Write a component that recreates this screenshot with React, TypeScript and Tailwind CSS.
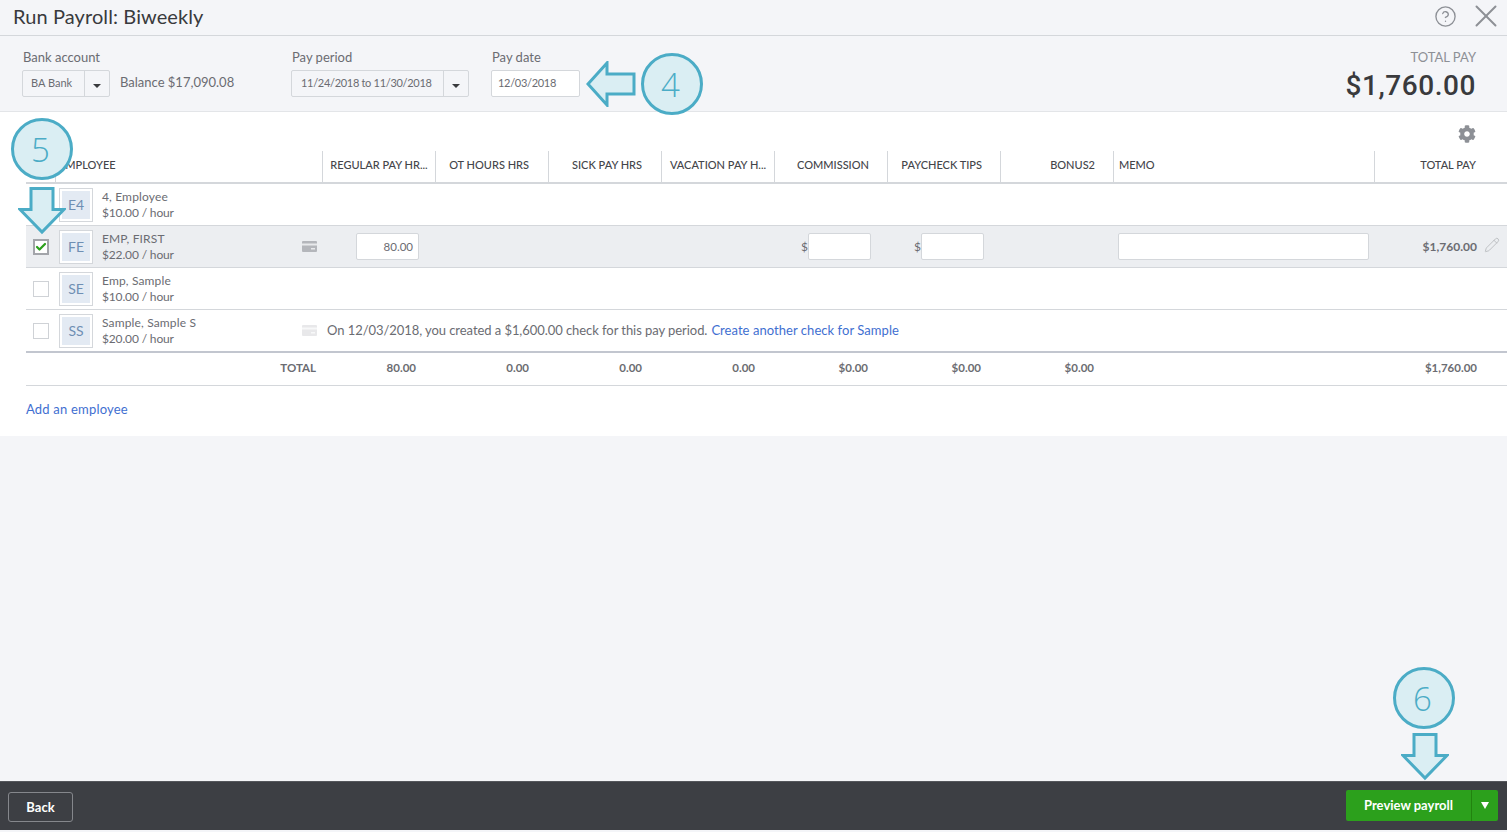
/**
 * Run Payroll: Biweekly — payroll grid with numbered callouts on top.
 */
import { Check, CircleHelp, Pencil, X } from 'lucide-react';
import { FaCog } from 'react-icons/fa';
import clsx from 'clsx';

const gridCols = 'grid grid-cols-[29px_267px_repeat(7,113px)_261px_133px]';

const headers = [
  { label: 'REGULAR PAY HR...', cls: 'justify-center' },
  { label: 'OT HOURS HRS', cls: 'justify-end pr-[19px]' },
  { label: 'SICK PAY HRS', cls: 'justify-end pr-[19px]' },
  { label: 'VACATION PAY H...', cls: 'justify-center' },
  { label: 'COMMISSION', cls: 'justify-end pr-[18px]' },
  { label: 'PAYCHECK TIPS', cls: 'justify-end pr-[18px]' },
  { label: 'BONUS2', cls: 'justify-end pr-[18px]' },
  { label: 'MEMO', cls: 'justify-start pl-[5px]' },
  { label: 'TOTAL PAY', cls: 'justify-end pr-[31px]' },
];

const totals = ['80.00', '0.00', '0.00', '0.00', '$0.00', '$0.00', '$0.00'];

function CardIcon({ faded }: { faded?: boolean }) {
  return (
    <svg width="15" height="11" viewBox="0 0 15 11" className={faded ? 'opacity-30' : ''}>
      <rect width="15" height="11" rx="1" fill="#b4b6bb" />
      <rect y="2.5" width="15" height="2" fill="#e8e9ec" />
      <rect x="9" y="7" width="4" height="1.5" fill="#e8e9ec" />
    </svg>
  );
}

function Checkbox({ checked }: { checked?: boolean }) {
  return (
    <div
      className={clsx(
        'ml-[7px] flex h-[16px] w-[16px] items-center justify-center bg-white',
        checked ? 'border-2 border-[#a3a5aa]' : 'border border-[#cfd2d6]',
      )}
    >
      {checked && <Check size={12} strokeWidth={4.5} className="text-[#2ca01c]" />}
    </div>
  );
}

function Employee({ initials, name, rate, children }: { initials: string; name: string; rate: string; children?: React.ReactNode }) {
  return (
    <div className="flex items-center pl-1 pr-[5px]">
      <div className="h-[34px] w-[34px] border border-[#d4d7db] bg-white p-[2px]">
        <div className="flex h-full w-full items-center justify-center bg-[#e3eaf3] text-[14px] text-[#6f8fb3]">{initials}</div>
      </div>
      <div className="ml-[9px] text-[12px] leading-[16px] text-[#6b6c72]">
        <div className="tracking-[0.15px]">{name}</div>
        <div className="tracking-[-0.15px]">{rate}</div>
      </div>
      <div className="ml-auto">{children}</div>
    </div>
  );
}

function MoneyInput() {
  return (
    <div className="flex items-center justify-end pr-[16px] text-[12px] text-[#6b6c72]">
      <span>$</span>
      <div className="h-[27px] w-[63px] rounded-[2px] border border-[#d4d7db] bg-white" />
    </div>
  );
}

function Callout({ n, className }: { n: number; className: string }) {
  return (
    <div
      className={clsx(
        "absolute flex h-[62px] w-[62px] items-center justify-center rounded-full border-[3px] border-[#4bacc6] bg-[#daeef3] pr-[3px] pt-px font-['Open_Sans',sans-serif] text-[33px] font-light text-[#4bacc6]",
        className,
      )}
    >
      {n}
    </div>
  );
}

function DownArrow({ className }: { className: string }) {
  return (
    <svg width="48" height="48" viewBox="0 0 48 48" className={clsx('absolute', className)}>
      <path d="M13 1.5h22v21h11L24 45 2 22.5h11z" fill="#daeef3" stroke="#4bacc6" strokeWidth="3" />
    </svg>
  );
}

export default function App() {
  return (
    <div className="relative flex h-[832px] w-[1507px] flex-col overflow-hidden bg-[#f4f5f8] font-['Lato',sans-serif] text-[#6b6c72]">
      {/* Title bar */}
      <div className="flex h-9 shrink-0 items-center justify-between border-b border-[#d4d7db] pb-[3px] pl-[13px] pr-[2px]">
        <h1 className="text-[20px] tracking-[0.1px] text-[#393a3d]">Run Payroll: Biweekly</h1>
        <div className="flex items-center gap-[10px] text-[#8d9096]">
          <CircleHelp size={23} strokeWidth={1.4} />
          <X size={38} strokeWidth={1.25} />
        </div>
      </div>

      {/* Filters */}
      <div className="flex h-[76px] shrink-0 border-b border-[#e3e5e8] pl-[22px] pr-[31px] pt-3 text-[13px]">
        <div className="w-[269px]">
          <div className="pl-px leading-[18px]">Bank account</div>
          <div className="mt-[4px] flex items-center">
            <div className="flex h-[27px] w-[88px] items-center rounded-[2px] border border-[#d4d7db] bg-[#f4f5f8] text-[11px]">
              <span className="w-[61px] pl-[8px]">BA Bank</span>
              <span className="flex h-full flex-1 items-center justify-center border-l border-[#d4d7db] pt-1">
                <span className="border-x-[4px] border-t-[4px] border-x-transparent border-t-[#393a3d]" />
              </span>
            </div>
            <span className="ml-[10px] pb-[2px]">Balance $17,090.08</span>
          </div>
        </div>
        <div className="w-[200px]">
          <div className="pl-px leading-[18px]">Pay period</div>
          <div className="mt-[4px] flex h-[27px] w-[178px] items-center rounded-[2px] border border-[#d4d7db] bg-[#f4f5f8] text-[11px] tracking-[-0.3px]">
            <span className="w-[151px] whitespace-nowrap pl-[9px]">11/24/2018 to 11/30/2018</span>
            <span className="flex h-full flex-1 items-center justify-center border-l border-[#d4d7db] pt-1">
              <span className="border-x-[4px] border-t-[4px] border-x-transparent border-t-[#393a3d]" />
            </span>
          </div>
        </div>
        <div>
          <div className="pl-px leading-[18px]">Pay date</div>
          <div className="mt-[4px] flex h-[27px] w-[89px] items-center rounded-[2px] border border-[#d4d7db] bg-white pl-[6px] text-[11px] tracking-[-0.3px]">12/03/2018</div>
        </div>
        <div className="ml-auto text-right">
          <div className="leading-[18px] text-[#8d9096]">TOTAL PAY</div>
          <div className="mt-[2px] font-['Roboto',sans-serif] text-[28px] font-medium leading-[36px] tracking-[0.55px] text-[#393a3d]">$1,760.00</div>
        </div>
      </div>

      {/* Payroll table */}
      <div className="h-[324px] shrink-0 bg-white pl-[26px]">
        <div className="flex h-[39px] items-center justify-end pr-[31px] pt-1 text-[#8d9096]">
          <FaCog size={18} />
        </div>

        <div className={clsx(gridCols, 'h-[33px] border-b-2 border-[#d4d7db] text-[11px] font-medium text-[#44454a]')}>
          <div />
          <div className="flex items-center border-l border-[#d4d7db] pb-[3px] pl-[3px]">EMPLOYEE</div>
          {headers.map((h) => (
            <div key={h.label} className={clsx('flex items-center whitespace-nowrap border-l border-[#d4d7db] pb-[3px]', h.cls)}>
              {h.label}
            </div>
          ))}
        </div>

        <div className={clsx(gridCols, 'h-[42px] border-b border-[#d4d7db]')}>
          <div className="flex items-center"><Checkbox /></div>
          <Employee initials="E4" name="4, Employee" rate="$10.00 / hour" />
        </div>

        <div className={clsx(gridCols, 'h-[42px] border-b border-[#d4d7db] bg-[#eceef1]')}>
          <div className="flex items-center"><Checkbox checked /></div>
          <Employee initials="FE" name="EMP, FIRST" rate="$22.00 / hour"><CardIcon /></Employee>
          <div className="flex items-center justify-end pr-[16px]">
            <div className="flex h-[27px] w-[63px] items-center justify-end rounded-[2px] border border-[#d4d7db] bg-white pr-[5px] text-[11.5px]">80.00</div>
          </div>
          <div />
          <div />
          <div />
          <MoneyInput />
          <MoneyInput />
          <div />
          <div className="flex items-center pl-[5px]">
            <div className="h-[27px] w-[251px] rounded-[2px] border border-[#d4d7db] bg-white" />
          </div>
          <div className="flex items-center justify-end gap-[7px] pr-[7px] text-[12px] font-bold">
            <span>$1,760.00</span>
            <Pencil size={16} strokeWidth={1} className="mb-1 text-[#a8aaae]" />
          </div>
        </div>

        <div className={clsx(gridCols, 'h-[42px] border-b border-[#d4d7db]')}>
          <div className="flex items-center"><Checkbox /></div>
          <Employee initials="SE" name="Emp, Sample" rate="$10.00 / hour" />
        </div>

        <div className={clsx(gridCols, 'h-[43px] border-b-2 border-[#c2c6cf]')}>
          <div className="flex items-center"><Checkbox /></div>
          <Employee initials="SS" name="Sample, Sample S" rate="$20.00 / hour"><CardIcon faded /></Employee>
          <div className="col-span-9 flex items-center pl-[5px] text-[13px]">
            <span className="tracking-[-0.06px]">On 12/03/2018, you created a $1,600.00 check for this pay period.</span>
            <a className="ml-1 tracking-[0.05px] text-[#3f6fd1]">Create another check for Sample</a>
          </div>
        </div>

        <div className={clsx(gridCols, 'h-[33px] border-b border-[#d4d7db] text-[11.5px] font-bold text-[#6b6c72]')}>
          <div />
          <div className="flex items-center justify-end pb-[2px] pr-[6px]">TOTAL</div>
          {totals.map((t, i) => (
            <div key={i} className="flex items-center justify-end pb-[2px] pr-[19px]">{t}</div>
          ))}
          <div />
          <div className="flex items-center justify-end pb-[2px] pr-[30px]">$1,760.00</div>
        </div>

        <a className="mt-[14px] block text-[13px] leading-[18px] tracking-[0.2px] text-[#3f6fd1]">Add an employee</a>
      </div>

      <div className="flex-1" />

      {/* Footer */}
      <div className="mb-[2px] flex h-[49px] shrink-0 items-start justify-between border-t border-[#55575c] bg-[#3d3f44] pl-2 pr-[9px]">
        <button className="mt-[10px] h-[30px] w-[65px] rounded-[3px] border border-[#85878c] pt-px text-[13px] font-bold text-white">Back</button>
        <div className="mt-2 flex h-[31px] w-[152px] rounded-[2px] bg-[#2ca01c] text-white">
          <button className="w-[126px] border-r border-[#22830f] text-[13px] font-bold">Preview payroll</button>
          <span className="flex flex-1 items-center justify-center">
            <span className="border-x-[4.5px] border-t-[7px] border-x-transparent border-t-white" />
          </span>
        </div>
      </div>

      {/* Numbered callouts over the page */}
      <svg width="52" height="46" viewBox="0 0 52 46" className="absolute left-[586px] top-[61px]">
        <path d="M48 13v20H21v11L2 23 21 2v11z" fill="#daeef3" stroke="#4bacc6" strokeWidth="3" />
      </svg>
      <Callout n={4} className="left-[641px] top-[53px]" />
      <Callout n={5} className="left-[11px] top-[118px]" />
      <DownArrow className="left-[18px] top-[187px]" />
      <Callout n={6} className="left-[1393px] top-[667px]" />
      <DownArrow className="left-[1401px] top-[733px]" />
    </div>
  );
}
